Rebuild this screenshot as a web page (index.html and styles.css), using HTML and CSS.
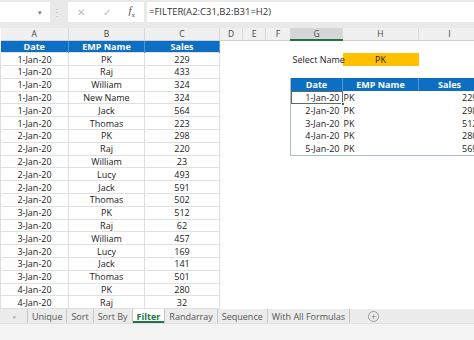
FILE: index.html
```html
<!DOCTYPE html>
<html lang="en">
<head>
  <meta charset="utf-8">
  <title>Filter</title>
  <link rel="stylesheet" href="styles.css">
</head>
<body>
  <div class="topbar">
    <div class="namebox"><span class="arrow">&#9662;</span></div>
    <div class="dots">&#8942;</div>
    <div class="fxbtns">
      <span class="btn">&#10005;</span>
      <span class="btn">&#10003;</span>
      <span class="btn fx"><i>f</i><sub>x</sub></span>
    </div>
    <div class="formula">=FILTER(A2:C31,B2:B31=H2)</div>
  </div>

  <div class="sheet">
    <table class="grid">
      <colgroup>
        <col style="width:68px"><col style="width:76px"><col style="width:75px">
        <col style="width:23px"><col style="width:23px"><col style="width:25px">
        <col style="width:52px"><col style="width:76px"><col style="width:62px">
      </colgroup>
      <tr class="letters">
        <th>A</th><th>B</th><th>C</th><th>D</th><th>E</th><th>F</th><th class="sel">G</th><th>H</th><th>I</th>
      </tr>
      <tr>
        <td class="hd">Date</td><td class="hd">EMP Name</td><td class="hd">Sales</td>
        <td></td><td></td><td></td><td></td><td></td><td></td>
      </tr>
      <tr>
        <td class="c">1-Jan-20</td><td class="c">PK</td><td class="c">229</td>
        <td></td><td></td><td></td><td class="label">Select Name</td><td class="pick">PK</td><td></td>
      </tr>
      <tr>
        <td class="c">1-Jan-20</td><td class="c">Raj</td><td class="c">433</td>
        <td></td><td></td><td></td><td></td><td></td><td></td>
      </tr>
      <tr>
        <td class="c">1-Jan-20</td><td class="c">William</td><td class="c">324</td>
        <td></td><td></td><td></td>
        <td class="hd2 first">Date</td><td class="hd2">EMP Name</td><td class="hd2">Sales</td>
      </tr>
      <tr>
        <td class="c">1-Jan-20</td><td class="c">New Name</td><td class="c">324</td>
        <td></td><td></td><td></td>
        <td class="out first active">1-Jan-20<span class="handle"></span></td><td class="out left">PK</td><td class="out">229</td>
      </tr>
      <tr>
        <td class="c">1-Jan-20</td><td class="c">Jack</td><td class="c">564</td>
        <td></td><td></td><td></td>
        <td class="out first">2-Jan-20</td><td class="out left">PK</td><td class="out">298</td>
      </tr>
      <tr>
        <td class="c">1-Jan-20</td><td class="c">Thomas</td><td class="c">223</td>
        <td></td><td></td><td></td>
        <td class="out first">3-Jan-20</td><td class="out left">PK</td><td class="out">512</td>
      </tr>
      <tr>
        <td class="c">2-Jan-20</td><td class="c">PK</td><td class="c">298</td>
        <td></td><td></td><td></td>
        <td class="out first">4-Jan-20</td><td class="out left">PK</td><td class="out">280</td>
      </tr>
      <tr>
        <td class="c">2-Jan-20</td><td class="c">Raj</td><td class="c">220</td>
        <td></td><td></td><td></td>
        <td class="out first last">5-Jan-20</td><td class="out left last">PK</td><td class="out last">569</td>
      </tr>
      <tr>
        <td class="c">2-Jan-20</td><td class="c">William</td><td class="c">23</td>
        <td></td><td></td><td></td><td></td><td></td><td></td>
      </tr>
      <tr>
        <td class="c">2-Jan-20</td><td class="c">Lucy</td><td class="c">493</td>
        <td></td><td></td><td></td><td></td><td></td><td></td>
      </tr>
      <tr>
        <td class="c">2-Jan-20</td><td class="c">Jack</td><td class="c">591</td>
        <td></td><td></td><td></td><td></td><td></td><td></td>
      </tr>
      <tr>
        <td class="c">2-Jan-20</td><td class="c">Thomas</td><td class="c">502</td>
        <td></td><td></td><td></td><td></td><td></td><td></td>
      </tr>
      <tr>
        <td class="c">3-Jan-20</td><td class="c">PK</td><td class="c">512</td>
        <td></td><td></td><td></td><td></td><td></td><td></td>
      </tr>
      <tr>
        <td class="c">3-Jan-20</td><td class="c">Raj</td><td class="c">62</td>
        <td></td><td></td><td></td><td></td><td></td><td></td>
      </tr>
      <tr>
        <td class="c">3-Jan-20</td><td class="c">William</td><td class="c">457</td>
        <td></td><td></td><td></td><td></td><td></td><td></td>
      </tr>
      <tr>
        <td class="c">3-Jan-20</td><td class="c">Lucy</td><td class="c">169</td>
        <td></td><td></td><td></td><td></td><td></td><td></td>
      </tr>
      <tr>
        <td class="c">3-Jan-20</td><td class="c">Jack</td><td class="c">141</td>
        <td></td><td></td><td></td><td></td><td></td><td></td>
      </tr>
      <tr>
        <td class="c">3-Jan-20</td><td class="c">Thomas</td><td class="c">501</td>
        <td></td><td></td><td></td><td></td><td></td><td></td>
      </tr>
      <tr>
        <td class="c">4-Jan-20</td><td class="c">PK</td><td class="c">280</td>
        <td></td><td></td><td></td><td></td><td></td><td></td>
      </tr>
      <tr>
        <td class="c">4-Jan-20</td><td class="c">Raj</td><td class="c">32</td>
        <td></td><td></td><td></td><td></td><td></td><td></td>
      </tr>
    </table>
  </div>

  <div class="tabs">
    <span class="nav">&#9666;</span>
    <span class="tab">Unique</span>
    <span class="tab">Sort</span>
    <span class="tab">Sort By</span>
    <span class="tab active">Filter</span>
    <span class="tab">Randarray</span>
    <span class="tab">Sequence</span>
    <span class="tab">With All Formulas</span>
    <span class="plus">+</span>
  </div>
  <div class="status"></div>
</body>
</html>
```

FILE: styles.css
```css
* {
  box-sizing: border-box;
}

body {
  margin: 0;
  width: 474px;
  height: 340px;
  overflow: hidden;
  font-family: "Open Sans", "Noto Sans", sans-serif;
  font-size: 9px;
  color: #222;
  background: #fff;
}

.topbar {
  height: 28px;
  background: #e9e9e9;
  display: flex;
  align-items: flex-start;
  padding-top: 2px;
}

.namebox {
  width: 50px;
  height: 20px;
  background: #fff;
  display: flex;
  align-items: center;
  justify-content: flex-end;
  padding-right: 8px;
}

.arrow {
  font-size: 7px;
  color: #777;
}

.dots {
  width: 14px;
  height: 20px;
  line-height: 20px;
  text-align: center;
  color: #bbb;
  font-size: 10px;
}

.fxbtns {
  width: 76px;
  height: 20px;
  background: #fff;
  margin-left: 4px;
  display: flex;
  align-items: center;
  justify-content: space-around;
  color: #bbb;
  font-size: 10px;
}

.fxbtns .fx {
  color: #555;
  font-family: "Liberation Serif", serif;
  font-size: 11px;
}

.fxbtns .fx sub {
  font-size: 7px;
}

.formula {
  flex: 1;
  height: 20px;
  margin-left: 3px;
  background: #fff;
  line-height: 20px;
  padding-left: 2px;
  font-size: 9.5px;
  color: #333;
}

.sheet {
  height: 281px;
  overflow: hidden;
}

.grid {
  table-layout: fixed;
  width: 480px;
  border-collapse: collapse;
}

.grid th {
  height: 12px;
  padding: 0;
  font-weight: normal;
  font-size: 8.5px;
  color: #444;
  background: #f0f0f0;
  border-right: 1px solid #d8d8d8;
  border-bottom: 1px solid #d0d0d0;
}

.grid th.sel {
  background: #d6d6d6;
  border-bottom: 2px solid #217346;
}

.grid td {
  height: 12.8px;
  padding: 0 2px;
  white-space: nowrap;
  overflow: hidden;
  line-height: 11px;
  font-size: 9px;
}

.grid td.c {
  text-align: center;
  border: 1px solid #e0e0e0;
}

.grid td.hd,
.grid td.hd2 {
  background: #0d6fc3;
  color: #fff;
  font-weight: bold;
  text-align: center;
  border-right: 1px solid #4f96d6;
}

.grid td.label {
  overflow: visible;
}

.grid td.pick {
  background: #ffc000;
  text-align: center;
}

.grid td.out {
  text-align: right;
  padding-right: 3px;
}

.grid td.left {
  text-align: left;
  padding-left: 1px;
}

.grid td.first {
  border-left: 1px solid #a9bcd3;
}

.grid td.last {
  border-bottom: 1px solid #a9bcd3;
}

.grid td.active {
  position: relative;
  overflow: visible;
  outline: 1px solid #5d6b5f;
  outline-offset: -1px;
}

.handle {
  position: absolute;
  right: -2px;
  bottom: -2px;
  width: 4px;
  height: 4px;
  background: #217346;
  border: 1px solid #fff;
}

.tabs {
  height: 15px;
  background: #ececec;
  display: flex;
  align-items: stretch;
  font-size: 9px;
  color: #555;
  border-bottom: 1px solid #e0e0e0;
}

.nav {
  width: 28px;
  text-align: center;
  color: #bbb;
  font-size: 7px;
  line-height: 15px;
  border-right: 1px solid #c8c8c8;
}

.tab {
  padding: 0 4px;
  line-height: 15px;
  border-right: 1px solid #c8c8c8;
}

.tab.active {
  background: #fff;
  color: #217346;
  font-weight: bold;
  box-shadow: inset 0 -2px 0 #217346;
}

.plus {
  margin-left: 18px;
  width: 11px;
  height: 11px;
  margin-top: 2px;
  border: 1px solid #999;
  border-radius: 50%;
  font-size: 9px;
  line-height: 9px;
  text-align: center;
  color: #777;
}

.status {
  height: 16px;
  background: #f3f3f3;
}
```
